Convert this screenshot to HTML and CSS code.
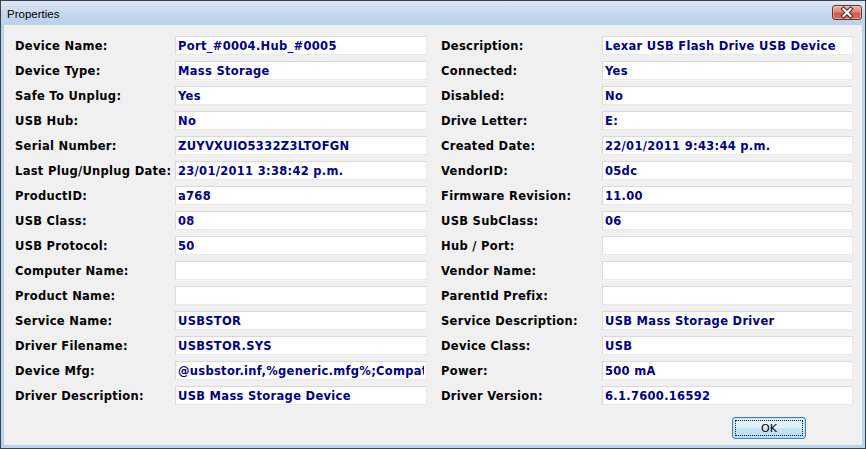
FILE: index.html
```html
<!DOCTYPE html>
<html>
<head>
<meta charset="utf-8">
<title>Properties</title>
<link rel="stylesheet" href="styles.css">
</head>
<body>
<div class="window">
  <div class="titlebar">
    <div class="title">Properties</div>
    <div class="close">
      <svg width="30" height="15" viewBox="0 0 30 15">
        <path d="M11.5 4 L18.5 11 M18.5 4 L11.5 11" stroke="#4a2a26" stroke-width="4.2" stroke-linecap="square" fill="none"/>
        <path d="M11.5 4 L18.5 11 M18.5 4 L11.5 11" stroke="#ffffff" stroke-width="2.2" stroke-linecap="square" fill="none"/>
      </svg>
    </div>
  </div>
  <div class="client">
    <div class="grid">
      <div class="label">Device Name:</div><div class="value"><span>Port_#0004.Hub_#0005</span></div>
      <div class="label right">Description:</div><div class="value"><span>Lexar USB Flash Drive USB Device</span></div>

      <div class="label">Device Type:</div><div class="value"><span>Mass Storage</span></div>
      <div class="label right">Connected:</div><div class="value"><span>Yes</span></div>

      <div class="label">Safe To Unplug:</div><div class="value"><span>Yes</span></div>
      <div class="label right">Disabled:</div><div class="value"><span>No</span></div>

      <div class="label">USB Hub:</div><div class="value"><span>No</span></div>
      <div class="label right">Drive Letter:</div><div class="value"><span>E:</span></div>

      <div class="label">Serial Number:</div><div class="value"><span>ZUYVXUIO5332Z3LTOFGN</span></div>
      <div class="label right">Created Date:</div><div class="value"><span>22/01/2011 9:43:44 p.m.</span></div>

      <div class="label">Last Plug/Unplug Date:</div><div class="value"><span>23/01/2011 3:38:42 p.m.</span></div>
      <div class="label right">VendorID:</div><div class="value"><span>05dc</span></div>

      <div class="label">ProductID:</div><div class="value"><span>a768</span></div>
      <div class="label right">Firmware Revision:</div><div class="value"><span>11.00</span></div>

      <div class="label">USB Class:</div><div class="value"><span>08</span></div>
      <div class="label right">USB SubClass:</div><div class="value"><span>06</span></div>

      <div class="label">USB Protocol:</div><div class="value"><span>50</span></div>
      <div class="label right">Hub / Port:</div><div class="value"><span></span></div>

      <div class="label">Computer Name:</div><div class="value"><span></span></div>
      <div class="label right">Vendor Name:</div><div class="value"><span></span></div>

      <div class="label">Product Name:</div><div class="value"><span></span></div>
      <div class="label right">ParentId Prefix:</div><div class="value"><span></span></div>

      <div class="label">Service Name:</div><div class="value"><span>USBSTOR</span></div>
      <div class="label right">Service Description:</div><div class="value"><span>USB Mass Storage Driver</span></div>

      <div class="label">Driver Filename:</div><div class="value"><span>USBSTOR.SYS</span></div>
      <div class="label right">Device Class:</div><div class="value"><span>USB</span></div>

      <div class="label">Device Mfg:</div><div class="value"><span>@usbstor.inf,%generic.mfg%;Compatible USB storage device</span></div>
      <div class="label right">Power:</div><div class="value"><span>500 mA</span></div>

      <div class="label">Driver Description:</div><div class="value"><span>USB Mass Storage Device</span></div>
      <div class="label right">Driver Version:</div><div class="value"><span>6.1.7600.16592</span></div>
    </div>
    <div class="footer">
      <div class="button"><span class="focus">OK</span></div>
    </div>
  </div>
</div>
</body>
</html>
```

FILE: styles.css
```css
html, body {
  margin: 0;
  padding: 0;
  background: #f0f0f0;
}

.window {
  width: 866px;
  height: 449px;
  box-sizing: border-box;
  border: 1px solid #3b4350;
  background: #bcd3ea;
  display: flex;
  flex-direction: column;
  overflow: hidden;
}

.titlebar {
  height: 24px;
  flex: none;
  display: flex;
  align-items: flex-start;
  background: linear-gradient(#dce7f4, #c2d6ec 60%, #bad1ea);
}

.title {
  font-family: "Liberation Sans", Arial, sans-serif;
  font-size: 11.5px;
  color: #000;
  margin-top: 7px;
  margin-left: 6px;
  line-height: 13px;
}

.close {
  margin-left: auto;
  margin-top: 4px;
  margin-right: 3px;
  width: 30px;
  height: 15px;
  box-sizing: border-box;
  border: 1px solid #6b3029;
  border-radius: 3px;
  background: linear-gradient(#eab1a4, #db8a7a 45%, #c95c4b 55%, #d3725e);
  box-shadow: inset 0 0 0 1px rgba(255, 220, 210, 0.45);
  display: flex;
  align-items: center;
  justify-content: center;
}

.close svg {
  display: block;
  flex: none;
}

.client {
  flex: 1;
  margin: 0 3px 3px 3px;
  background: #f0f0f0;
  padding: 11px 9px 0 11px;
  box-shadow: 0 1px 0 #a9d6ea;
}

.grid {
  display: grid;
  grid-template-columns: 160px 252px 175px 251px;
  grid-auto-rows: 19px;
  row-gap: 6px;
}

.label {
  font-family: "DejaVu Sans", Verdana, sans-serif;
  font-weight: bold;
  font-size: 11.5px;
  letter-spacing: 0.3px;
  color: #000;
  display: flex;
  align-items: center;
  padding-top: 1px;
  white-space: nowrap;
}

.label.right {
  padding-left: 14px;
}

.value {
  box-sizing: border-box;
  background: #fff;
  border: 1px solid;
  border-color: #d9d9d9 #e9e9e9 #e9e9e9 #d9d9d9;
  padding: 1px 2px 0 2px;
  display: flex;
  align-items: center;
  overflow: hidden;
}

.value span {
  font-family: "DejaVu Sans", Verdana, sans-serif;
  font-weight: bold;
  font-size: 11.5px;
  letter-spacing: 0.3px;
  color: #000080;
  white-space: nowrap;
  overflow: hidden;
  text-overflow: clip;
  flex: 1;
  min-width: 0;
}

.footer {
  display: flex;
  justify-content: flex-end;
  margin-top: 12px;
  padding-right: 47px;
}

.button {
  width: 74px;
  height: 22px;
  box-sizing: border-box;
  border: 1px solid #3c7fb1;
  border-radius: 3px;
  background: linear-gradient(#e8f5fc, #dcf0fb 48%, #c7e6f8 52%, #b4dcf3);
  box-shadow: inset 0 0 0 1px #bfe3f7;
  padding: 2px;
  display: flex;
}

.focus {
  flex: 1;
  border: 1px dotted #1b1b1b;
  display: flex;
  align-items: center;
  justify-content: center;
  font-family: "DejaVu Sans", Verdana, sans-serif;
  font-size: 11px;
  color: #000;
}
```
